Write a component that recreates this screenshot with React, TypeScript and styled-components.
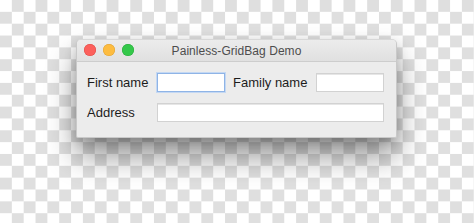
import React from 'react';
import styled, { createGlobalStyle } from 'styled-components';

const GlobalStyle = createGlobalStyle`
	html, body {
		margin: 0;
		padding: 0;
	}
	body {
		width: 474px;
		height: 223px;
		overflow: hidden;
		font-family: 'Liberation Sans', Arial, sans-serif;
		background-color: #ffffff;
		background-image: conic-gradient(
			#dfdfdf 0 25%,
			#ffffff 0 50%,
			#dfdfdf 0 75%,
			#ffffff 0
		);
		background-size: 23.7px 23.7px;
	}
`;

const Stage = styled.div`
	padding: 39px 0 0 76px;
`;

const Window = styled.div`
	width: 321px;
	height: 99px;
	box-sizing: border-box;
	display: flex;
	flex-direction: column;
	background: #ececec;
	border: 1px solid #c9c9c9;
	border-top-color: #d8d8d8;
	border-radius: 5px 5px 2px 2px;
	box-shadow: 0 18px 30px rgba(0, 0, 0, 0.42), 0 4px 12px rgba(0, 0, 0, 0.16);
	overflow: hidden;
`;

const TitleBar = styled.div`
	position: relative;
	height: 21px;
	flex: none;
	display: flex;
	align-items: center;
	justify-content: center;
	background: linear-gradient(#ececec, #e0e0e0);
	border-bottom: 1px solid #cdcdcd;
`;

const Lights = styled.div`
	position: absolute;
	left: 7px;
	top: 4px;
	display: flex;
	gap: 7px;
`;

const Light = styled.span<{ $color: string; $ring: string }>`
	width: 12px;
	height: 12px;
	border-radius: 50%;
	background: ${(p) => p.$color};
	box-shadow: inset 0 0 0 0.5px ${(p) => p.$ring};
`;

const Title = styled.span`
	font-size: 12px;
	color: #4d4d4d;
	letter-spacing: 0.05px;
`;

const Form = styled.div`
	display: grid;
	grid-template-columns: 62px 68px 75px 68px;
	grid-auto-rows: 19px;
	column-gap: 8px;
	row-gap: 11px;
	align-items: center;
	padding: 11px 12px 0 10px;
`;

const Label = styled.label`
	font-size: 13px;
	color: #1c1c1c;
	white-space: nowrap;
`;

const Field = styled.div<{ $focused?: boolean; $span?: number }>`
	height: 19px;
	box-sizing: border-box;
	background: #ffffff;
	border: 1px solid ${(p) => (p.$focused ? '#8fb4e6' : '#d2d2d2')};
	box-shadow: ${(p) => (p.$focused ? '0 0 0 1px #c4d8f3' : 'inset 0 1px 0 #e6e6e6')};
	grid-column: ${(p) => (p.$span ? `span ${p.$span}` : 'auto')};
`;

export default function App() {
	return (
		<>
			<GlobalStyle />
			<Stage>
				<Window>
					<TitleBar>
						<Lights>
							<Light $color="#fc605c" $ring="#de4a45" />
							<Light $color="#fdbc40" $ring="#dea236" />
							<Light $color="#34c84a" $ring="#2aa83c" />
						</Lights>
						<Title>Painless-GridBag Demo</Title>
					</TitleBar>
					<Form>
						<Label>First name</Label>
						<Field $focused />
						<Label>Family name</Label>
						<Field />
						<Label>Address</Label>
						<Field $span={3} />
					</Form>
				</Window>
			</Stage>
		</>
	);
}
